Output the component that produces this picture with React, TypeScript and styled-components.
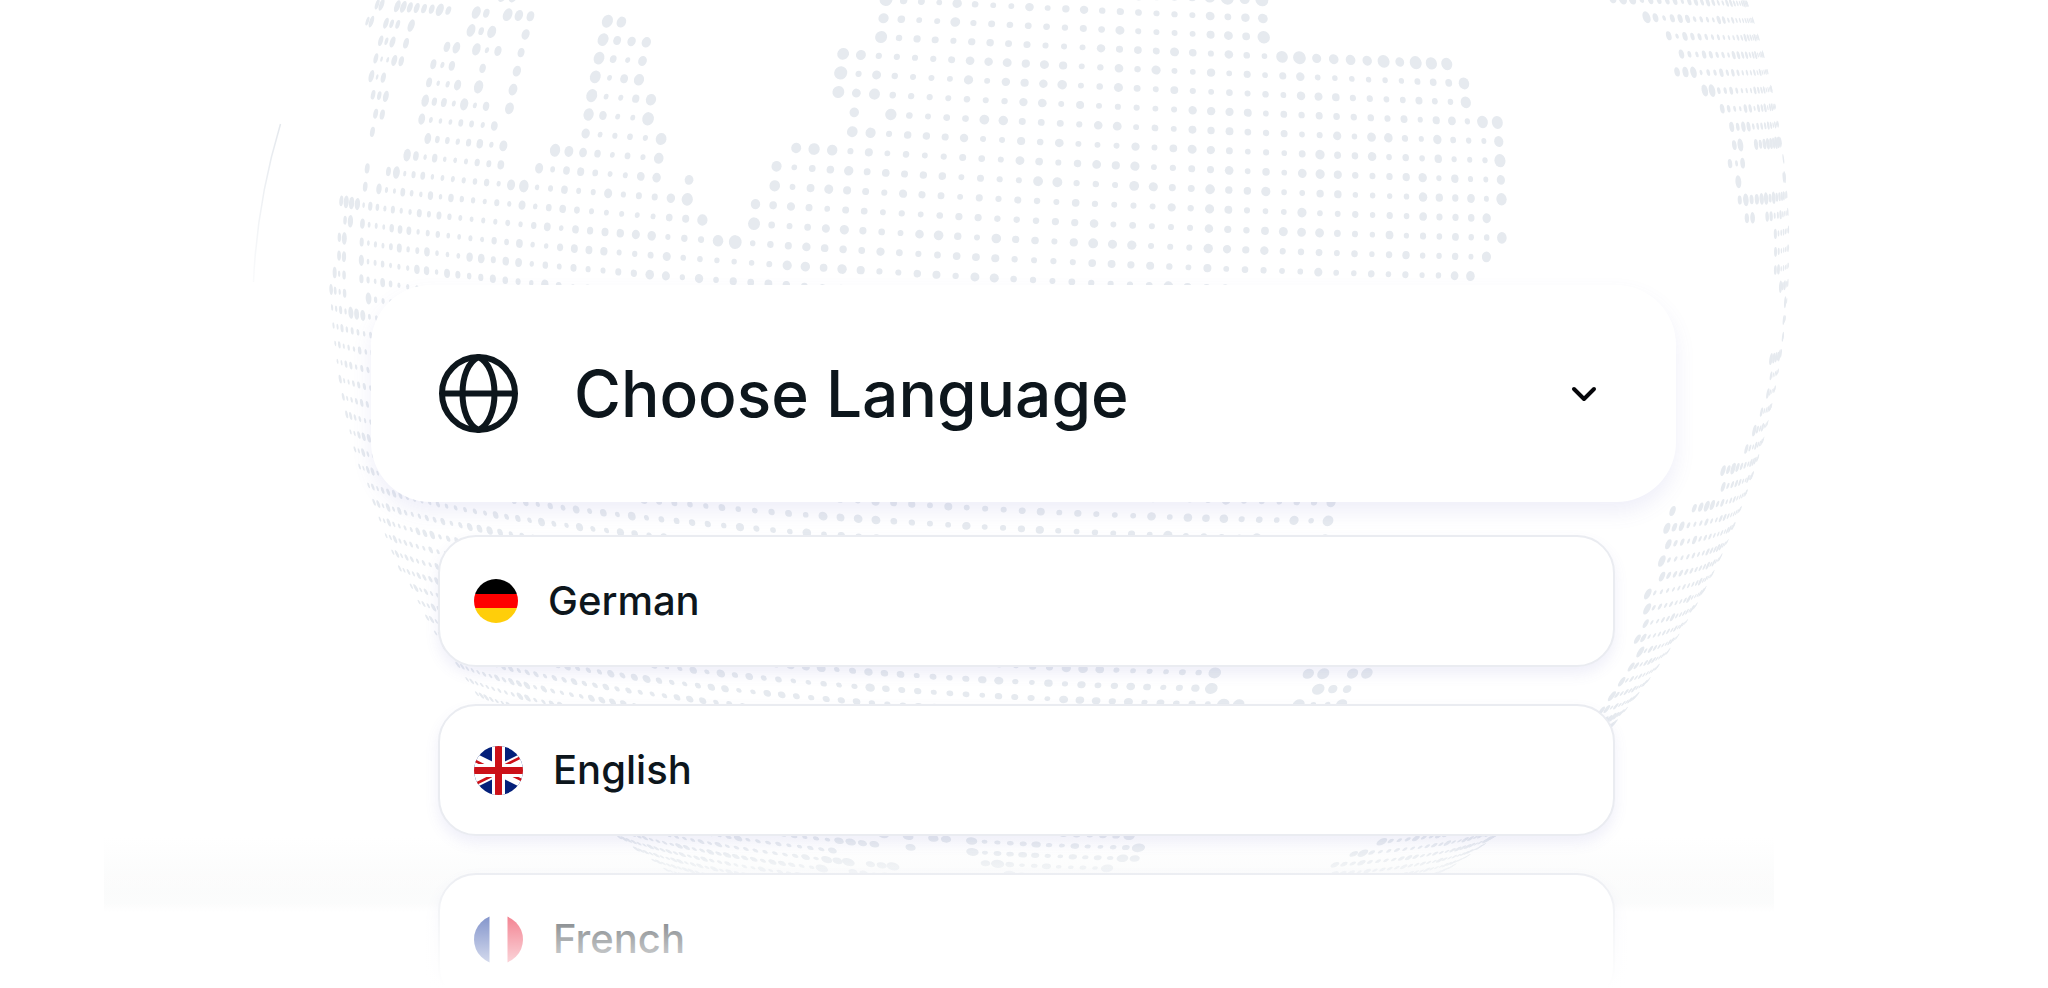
import React, { useId } from "react";
import styled, { createGlobalStyle } from "styled-components";

/* ---------- dotted globe ---------- */

type Span = [number, number];

const GLOBE = { cx: 1051, cy: 247, radius: 732.7, perspective: 0.119, tilt: 0.049, roll: 0.05 };
const GRID = { lat0: 0.27018, lon0: 0.16743, latStep: 0.02381, lonStep: 0.02338 };

/* Visible disc of the sphere: nothing is drawn outside it. */
const DISC = { cx: 1063, cy: 250, radius: 736 };

/* Land spans per latitude row of the northern half, west of the far coast. */
const NORTH: Record<number, Span[]> = {
  [-4]: [[478, 514], [880, 1270]],
  [-3]: [[474, 516], [880, 1270]],
  [-2]: [[376, 384], [468, 517], [880, 1270]],
  [-1]: [[376, 384], [392, 450], [474, 492], [504, 535], [600, 626], [880, 1450]],
  0: [[364, 372], [382, 404], [408, 415], [469, 496], [520, 530], [595, 651], [840, 1466]],
  1: [[376, 399], [402, 410], [446, 464], [473, 502], [515, 525], [590, 646], [838, 1469]],
  2: [[371, 405], [433, 459], [478, 488], [511, 521], [587, 643], [836, 1500]],
  3: [[371, 389], [421, 464], [474, 484], [507, 517], [583, 656], [850, 863], [882, 1501]],
  4: [[371, 390], [425, 491], [503, 513], [580, 652], [848, 1503]],
  5: [[373, 387], [421, 502], [577, 666], [791, 1503]],
  6: [[369, 377], [426, 507], [546, 663], [771, 1504]],
  7: [[404, 416], [423, 505], [531, 660], [682, 694], [769, 1490]],
  8: [[363, 373], [382, 692], [750, 1504]],
  9: [[362, 371], [374, 709], [748, 1490]],
  10: [[340, 354], [357, 1474]],
  11: [[342, 351], [360, 1474]],
  12: [[338, 347], [359, 1474]],
  13: [[338, 347], [359, 1450]],
  14: [[334, 346], [359, 1450]],
  15: [[326, 348], [362, 1400]],
};

/* Land spans by height for the southern half: [from, to, spans]. */
const SOUTH: [number, number, Span[]][] = [
  [280, 496, [[0, 1400]]],
  [496, 600, [[0, 1337]]],
  [600, 680, [[0, 1224], [1304, 1334], [1348, 1377]]],
  [680, 695, [[0, 1222], [1315, 1358]]],
  [695, 740, [[0, 1250], [1296, 1352]]],
  [740, 846, [[0, 884], [898, 910], [924, 948], [960, 1142], [1376, 1500]]],
  [846, 855, [[0, 840], [901, 913], [960, 1150], [1350, 1482]]],
  [855, 864, [[0, 818], [823, 856], [974, 1136], [1336, 1470]]],
  [864, 990, [[0, 822], [850, 896], [1000, 1110], [1328, 1460]]],
];

/* Outline of the eastern coast near the limb. */
const EAST: [number, number][] = [
  [1610, -30], [1612, 10], [1637, 13], [1638, 29], [1660, 32], [1662, 48], [1675, 50],
  [1677, 80], [1697, 84], [1698, 100], [1716, 103], [1717, 119], [1727, 121], [1729, 155],
  [1733, 191], [1735, 209], [1743, 211], [1743, 226], [1772, 228], [1774, 280], [1784, 296],
  [1782, 350], [1771, 352], [1768, 384], [1764, 402], [1757, 420], [1749, 440], [1738, 458],
  [1722, 462], [1718, 500], [1672, 503], [1665, 533], [1660, 560], [1654, 582], [1645, 598],
  [1641, 620], [1634, 640], [1640, 655], [1630, 668], [1618, 683], [1605, 700], [1598, 720],
  [1640, 760], [1840, 700], [1840, -30],
];

/* Water inside that outline. */
const EAST_GAPS: [number, number, number, number][] = [
  [1746, 138, 1755, 154],
  [1743, 154, 1783, 191],
  [1753, 209, 1763, 226],
  [1680, 503, 1694, 520],
];

function inPolygon(x: number, y: number, poly: [number, number][]) {
  let inside = false;
  for (let i = 0, j = poly.length - 1; i < poly.length; j = i++) {
    const [xi, yi] = poly[i];
    const [xj, yj] = poly[j];
    if (yi > y !== yj > y && x < ((xj - xi) * (y - yi)) / (yj - yi) + xi) inside = !inside;
  }
  return inside;
}

function isLand(row: number, x: number, y: number) {
  if (x > 1590) {
    return (
      inPolygon(x, y, EAST) &&
      !EAST_GAPS.some(([x0, y0, x1, y1]) => x > x0 && x < x1 && y > y0 && y < y1)
    );
  }
  const spans = row <= 15 ? NORTH[row] : SOUTH.find(([a, b]) => y >= a && y < b)?.[2];
  return !!spans?.some(([a, b]) => x >= a && x <= b);
}

/* Sphere coordinates to camera space: x right, y down, z towards the viewer. */
function toCamera(x: number, y: number, z: number): [number, number, number] {
  const { tilt, roll } = GLOBE;
  const ty = y * Math.cos(tilt) + z * Math.sin(tilt);
  const tz = -y * Math.sin(tilt) + z * Math.cos(tilt);
  return [x * Math.cos(roll) - ty * Math.sin(roll), x * Math.sin(roll) + ty * Math.cos(roll), tz];
}

function noise(a: number, b: number) {
  const v = Math.sin(a * 127.1 + b * 311.7) * 43758.5453;
  return v - Math.floor(v);
}

function place(row: number, col: number) {
  const lat = GRID.lat0 - row * GRID.latStep;
  const lon = GRID.lon0 + col * GRID.lonStep;
  const p = toCamera(Math.cos(lat) * Math.sin(lon), -Math.sin(lat), Math.cos(lat) * Math.cos(lon));
  const scale = GLOBE.radius / (1 - p[2] * GLOBE.perspective);
  return { lat, lon, z: p[2], scale, x: GLOBE.cx + p[0] * scale, y: GLOBE.cy + p[1] * scale };
}

function buildDots() {
  const dots: { key: string; transform: string }[] = [];
  for (let row = -5; row <= 56; row++) {
    for (let col = -82; col <= 70; col++) {
      const d = place(row, col);
      if (d.z < 0.125 || d.y < -10 || !isLand(row, d.x, d.y)) continue;
      if (Math.hypot(d.x - DISC.cx, d.y - DISC.cy) > DISC.radius) continue;
      const neighbours = [[0, -1], [0, 1], [-1, 0], [1, 0]].filter(([r, c]) => {
        const n = place(row + r, col + c);
        return row + r < -5 || n.z < 0.13 || isLand(row + r, n.x, n.y);
      }).length;
      const n = noise(row, col);
      const base = neighbours < 4 ? 4.2 + n * 2 : 2.6 + n * n * 1.8;
      const r = (base / GLOBE.radius) * d.scale;
      const e = toCamera(Math.cos(d.lon), 0, -Math.sin(d.lon));
      const s = toCamera(
        Math.sin(d.lat) * Math.sin(d.lon),
        Math.cos(d.lat),
        Math.sin(d.lat) * Math.cos(d.lon),
      );
      const m = [e[0] * r, e[1] * r, s[0] * r, s[1] * r, d.x, d.y].map((v) => v.toFixed(2));
      dots.push({ key: `${row}:${col}`, transform: `matrix(${m.join(" ")})` });
    }
  }
  return dots;
}

const DOTS = buildDots();

function DottedGlobe() {
  const id = useId();
  return (
    <Backdrop viewBox="0 0 2048 988" preserveAspectRatio="xMidYMin slice" aria-hidden="true">
      <defs>
        <linearGradient id={id} x1="0" y1="0" x2="0" y2="1">
          <stop offset="0" stopColor="#e4e8ed" />
          <stop offset="1" stopColor="#e4e8ed" stopOpacity="0.2" />
        </linearGradient>
      </defs>
      <path d="M280.500 124C266 172 256 224 253.500 282" fill="none" stroke={`url(#${id})`} strokeWidth="1.500" />
      <g fill="#e6eaef">
        {DOTS.map((d) => (
          <circle key={d.key} r="1" transform={d.transform} />
        ))}
      </g>
    </Backdrop>
  );
}

/* ---------- icons ---------- */

function GlobeIcon() {
  return (
    <svg width="79" height="79" viewBox="0 0 79 79" fill="none" stroke="#0d161c" strokeWidth="6" aria-hidden="true">
      <circle cx="39.5" cy="39.5" r="36.500" />
      <path d="M3 39.500H76" />
      <path d="M39.500 3C29 8 23.500 23 23.500 39.500S29 71 39.500 76C50 71 55.500 56 55.500 39.500S50 8 39.500 3Z" />
    </svg>
  );
}

function ChevronIcon() {
  return (
    <svg width="26" height="16" viewBox="0 0 26 16" fill="none" stroke="#05060a" strokeWidth="4" strokeLinecap="round" strokeLinejoin="round" aria-hidden="true">
      <path d="M3 3L13 13L23 3" />
    </svg>
  );
}

function GermanFlag() {
  return (
    <Flag $size={44} viewBox="0 0 44 44" aria-hidden="true">
      <path fill="#000" d="M0 0H44V15H0Z" />
      <path fill="#f00" d="M0 15H44V29H0Z" />
      <path fill="#ffce0a" d="M0 29H44V44H0Z" />
    </Flag>
  );
}

function BritishFlag() {
  return (
    <Flag $size={49} viewBox="-24.5 -24.5 49 49" aria-hidden="true">
      <path fill="#04207a" d="M-25 -25H25V25H-25Z" />
      <path stroke="#fff" strokeWidth="10.500" d="M-49 -24.500L49 24.500M-49 24.500L49 -24.500" />
      <g stroke="#cc1118" strokeWidth="2.600">
        <path d="M-30 -13L0 2" />
        <path d="M30 -17L0 -2" />
        <path d="M-30 17L0 2" />
        <path d="M30 13L0 -2" />
      </g>
      <path fill="#fff" d="M-6.500 -25H6.500V-6.500H25V6.500H6.500V25H-6.500V6.500H-25V-6.500H-6.500Z" />
      <path fill="#cc1118" d="M-3.500 -25H3.500V-3.500H25V3.500H3.500V25H-3.500V3.500H-25V-3.500H-3.500Z" />
    </Flag>
  );
}

function FrenchFlag() {
  return (
    <Flag $size={49} viewBox="0 0 49 49" aria-hidden="true">
      <path fill="#fff" d="M0 0H49V49H0Z" />
      <path fill="#10329c" d="M0 0H15.500V49H0Z" />
      <path fill="#e8112d" d="M33.500 0H49V49H33.500Z" />
    </Flag>
  );
}

/* ---------- layout ---------- */

const GlobalStyle = createGlobalStyle`
  body {
    margin: 0;
    background: #fff;
    color: #0d161c;
    font-family: Inter, "Liberation Sans", sans-serif;
  }
`;

const Page = styled.main`
  position: relative;
  box-sizing: border-box;
  height: 100vh;
  padding: 285px 25px 0 24px;
  overflow: hidden;
`;

const Backdrop = styled.svg`
  position: absolute;
  inset: 0;
  width: 100%;
  height: 100%;
`;

const Haze = styled.div`
  position: absolute;
  top: 838px;
  left: 5.1%;
  right: 13.4%;
  height: 74px;
  background: linear-gradient(rgba(249, 250, 250, 0), #f9fafa 80%, #f9fafa 88%, rgba(255, 255, 255, 0.9));
`;

const Fade = styled.div`
  position: absolute;
  inset: auto 0 0;
  height: 128px;
  background: linear-gradient(rgba(255, 255, 255, 0), rgba(255, 255, 255, 0.5) 46%, #fff);
  pointer-events: none;
`;

const Picker = styled.div`
  position: relative;
  max-width: 1305px;
  margin: 0 auto;
`;

const Trigger = styled.button`
  display: flex;
  align-items: center;
  width: 100%;
  padding: 69px 79px 69px 68px;
  border: 0;
  border-radius: 60px;
  background: #fff;
  box-shadow: 0 10px 20px rgba(99, 99, 200, 0.1);
  color: inherit;
  font: 500 64px/79px Inter, "Liberation Sans", sans-serif;
  text-align: left;
  cursor: pointer;
`;

const TriggerLabel = styled.span`
  flex: 1;
  margin-left: 56px;
`;

const Options = styled.ul`
  display: flex;
  flex-direction: column;
  gap: 37px;
  margin: 33px 61px 0 67px;
  padding: 0;
  list-style: none;
`;

const Option = styled.button`
  display: flex;
  align-items: center;
  gap: 30px;
  box-sizing: border-box;
  width: 100%;
  height: 132px;
  padding: 0 34px;
  border: 2px solid #eaecf1;
  border-radius: 38px;
  background: #fff;
  box-shadow: 0 7px 14px rgba(99, 99, 200, 0.1);
  color: inherit;
  font: 500 40px/48px Inter, "Liberation Sans", sans-serif;
  text-align: left;
  cursor: pointer;
`;

const Flag = styled.svg<{ $size: number }>`
  flex: none;
  width: ${(p) => p.$size}px;
  height: ${(p) => p.$size}px;
  border-radius: 50%;
`;

const LANGUAGES = [
  { name: "German", Icon: GermanFlag },
  { name: "English", Icon: BritishFlag },
  { name: "French", Icon: FrenchFlag },
];

export default function App() {
  return (
    <>
      <GlobalStyle />
      <Page>
        <DottedGlobe />
        <Haze />
        <Picker>
          <Trigger type="button" aria-expanded="true" aria-controls="languages">
            <GlobeIcon />
            <TriggerLabel>Choose Language</TriggerLabel>
            <ChevronIcon />
          </Trigger>
          <Options id="languages">
            {LANGUAGES.map(({ name, Icon }) => (
              <li key={name}>
                <Option type="button">
                  <Icon />
                  {name}
                </Option>
              </li>
            ))}
          </Options>
        </Picker>
        <Fade />
      </Page>
    </>
  );
}
